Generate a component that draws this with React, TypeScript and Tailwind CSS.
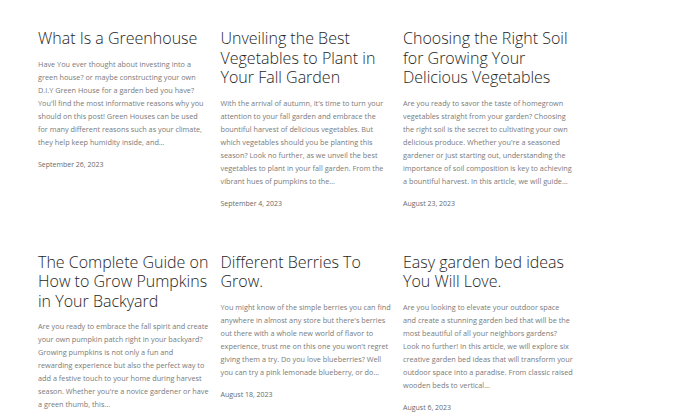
import React from "react";

type Post = { title: string[]; body: string[]; date: string };

const posts: Post[] = [
  {
    title: ["What Is a Greenhouse"],
    body: [
      "Have You ever thought about investing into a",
      "green house? or maybe constructing your own",
      "D.I.Y Green House for a garden bed you have?",
      "You'll find the most informative reasons why you",
      "should on this post! Green Houses can be used",
      "for many different reasons such as your climate,",
      "they help keep humidity inside, and…",
    ],
    date: "September 26, 2023",
  },
  {
    title: ["Unveiling the Best", "Vegetables to Plant in", "Your Fall Garden"],
    body: [
      "With the arrival of autumn, it's time to turn your",
      "attention to your fall garden and embrace the",
      "bountiful harvest of delicious vegetables. But",
      "which vegetables should you be planting this",
      "season? Look no further, as we unveil the best",
      "vegetables to plant in your fall garden. From the",
      "vibrant hues of pumpkins to the…",
    ],
    date: "September 4, 2023",
  },
  {
    title: ["Choosing the Right Soil", "for Growing Your", "Delicious Vegetables"],
    body: [
      "Are you ready to savor the taste of homegrown",
      "vegetables straight from your garden? Choosing",
      "the right soil is the secret to cultivating your own",
      "delicious produce. Whether you're a seasoned",
      "gardener or just starting out, understanding the",
      "importance of soil composition is key to achieving",
      "a bountiful harvest. In this article, we will guide…",
    ],
    date: "August 23, 2023",
  },
  {
    title: ["The Complete Guide on", "How to Grow Pumpkins", "in Your Backyard"],
    body: [
      "Are you ready to embrace the fall spirit and create",
      "your own pumpkin patch right in your backyard?",
      "Growing pumpkins is not only a fun and",
      "rewarding experience but also the perfect way to",
      "add a festive touch to your home during harvest",
      "season. Whether you're a novice gardener or have",
      "a green thumb, this…",
    ],
    date: "August 10, 2023",
  },
  {
    title: ["Different Berries To", "Grow."],
    body: [
      "You might know of the simple berries you can find",
      "anywhere in almost any store but there's berries",
      "out there with a whole new world of flavor to",
      "experience, trust me on this one you won't regret",
      "giving them a try. Do you love blueberries? Well",
      "you can try a pink lemonade blueberry, or do…",
    ],
    date: "August 18, 2023",
  },
  {
    title: ["Easy garden bed ideas", "You Will Love."],
    body: [
      "Are you looking to elevate your outdoor space",
      "and create a stunning garden bed that will be the",
      "most beautiful of all your neighbors gardens?",
      "Look no further! In this article, we will explore six",
      "creative garden bed ideas that will transform your",
      "outdoor space into a paradise. From classic raised",
      "wooden beds to vertical…",
    ],
    date: "August 6, 2023",
  },
];

export default function App() {
  return (
    <div
      className="w-[680px] h-[416px] overflow-hidden bg-white"
      style={{ fontFamily: '"Open Sans", "Noto Sans", sans-serif' }}
    >
      <div className="grid grid-cols-[168px_168px_168px] gap-x-[14.5px] gap-y-[43px] pl-[38px] pt-[29px]">
        {posts.map((p) => (
          <article key={p.date} className="flex flex-col">
            <h2 className="text-[16px] leading-[19.5px] font-light text-[#1e1e1e]">
              {p.title.map((l) => (
                <span key={l} className="block whitespace-nowrap">
                  {l}
                </span>
              ))}
            </h2>
            <p className="mt-[9px] text-[7.3px] leading-[13px] text-[#7a7a7a]">
              {p.body.map((l) => (
                <span key={l} className="block whitespace-nowrap">
                  {l}
                </span>
              ))}
            </p>
            <p className="mt-[9px] text-[7px] leading-[13px] text-[#6a6a6a]">{p.date}</p>
          </article>
        ))}
      </div>
    </div>
  );
}
